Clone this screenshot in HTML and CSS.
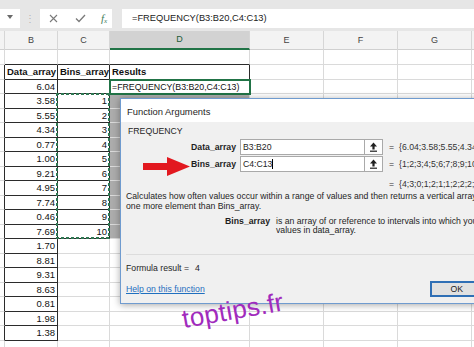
FILE: index.html
```html
<!DOCTYPE html>
<html lang="en">
<head>
  <meta charset="UTF-8">
  <meta name="viewport" content="width=device-width, initial-scale=1.0">
  <title>FREQUENCY - Function Arguments</title>
  <link rel="stylesheet" href="styles.css">
</head>
<body>
<div class="app">
  <!-- formula bar -->
  <div class="formula-bar">
    <div class="name-box">
      <svg width="6" height="4" viewBox="0 0 6 4"><polygon points="0,0 6,0 3,4" fill="#6a6a6a"/></svg>
    </div>
    <div class="grip">⋮</div>
    <div class="fx-buttons">
      <svg class="fx-icon" width="9" height="9" viewBox="0 0 9 9"><path d="M1 1 L8 8 M8 1 L1 8" stroke="#7a7a7a" stroke-width="1.1" fill="none"/></svg>
      <svg class="fx-icon" width="11" height="9" viewBox="0 0 11 9"><path d="M1 4.5 L4 7.5 L10 1" stroke="#7a7a7a" stroke-width="1.3" fill="none"/></svg>
      <span class="fx-icon fx">f<sub>x</sub></span>
    </div>
    <div class="formula-input">=FREQUENCY(B3:B20,C4:C13)</div>
  </div>

  <!-- column letters -->
  <div class="col-headers">
    <div></div>
    <div>B</div>
    <div>C</div>
    <div class="active">D</div>
    <div>E</div>
    <div>F</div>
    <div>G</div>
    <div></div>
  </div>

  <div class="sheet" id="sheet"></div>

  <!-- Function Arguments dialog -->
  <div class="dialog">
    <div class="dlg-title">Function Arguments</div>
    <div class="dlg-body">
      <div class="fn-name">FREQUENCY</div>
      <div class="arg-row">
        <div class="arg-label">Data_array</div>
        <div class="arg-input">B3:B20</div>
        <div class="arg-btn">
          <svg width="9" height="10" viewBox="0 0 9 10"><path d="M4.5 0.5 L8 4.5 L5.6 4.5 L5.6 7.5 L3.4 7.5 L3.4 4.5 L1 4.5 Z" fill="#1f1f1f"/><rect x="1" y="8.6" width="7" height="1.2" fill="#1f1f1f"/></svg>
        </div>
        <div class="arg-eq">=</div>
        <div class="arg-value">{6.04;3.58;5.55;4.34;0.77;1;9.21;4.95;7.74;0.46;7.69;1.7}</div>
      </div>
      <div class="arg-row">
        <div class="arg-label">Bins_array</div>
        <div class="arg-input">C4:C13<span class="caret-line"></span></div>
        <div class="arg-btn">
          <svg width="9" height="10" viewBox="0 0 9 10"><path d="M4.5 0.5 L8 4.5 L5.6 4.5 L5.6 7.5 L3.4 7.5 L3.4 4.5 L1 4.5 Z" fill="#1f1f1f"/><rect x="1" y="8.6" width="7" height="1.2" fill="#1f1f1f"/></svg>
        </div>
        <div class="arg-eq">=</div>
        <div class="arg-value">{1;2;3;4;5;6;7;8;9;10}</div>
      </div>
      <div class="arg-result"><span class="arg-eq">=</span><span class="arg-value">{4;3;0;1;2;1;1;2;2;2;0}</span></div>

      <div class="desc">Calculates how often values occur within a range of values and then returns a vertical array of numbers having<br>one more element than Bins_array.</div>
      <div class="arg-help">
        <div class="help-label">Bins_array</div>
        <div class="help-text">is an array of or reference to intervals into which you want to group the<br>values in data_array.</div>
      </div>

      <div class="dlg-sep"></div>
      <div class="result-line">Formula result =<span class="result-val">4</span></div>
      <div class="dlg-footer">
        <a class="help-link" href="#">Help on this function</a>
        <div class="dlg-btn default">OK</div>
        <div class="dlg-btn">Cancel</div>
      </div>
    </div>
    <!-- red pointer arrow -->
    <svg class="red-arrow" width="48" height="19" viewBox="0 0 48 19"><polygon points="0,6 24,6 24,0 47,9.5 24,19 24,13 0,13" fill="#e2181f"/></svg>
  </div>

  <div class="watermark">toptips.fr</div>
</div>

<script>
  // valeurs de la feuille
  const dataArray = ["6.04","3.58","5.55","4.34","0.77","1.00","9.21","4.95","7.74","0.46","7.69","1.70","8.81","9.31","8.63","0.81","1.98","1.38"];
  const cols = ["a","b","c","d","e","f","g","h"];
  const sheet = document.getElementById("sheet");

  function cellInfo(row, col) {
    const info = { text: "", cls: [] };
    const boxedB = row >= 2 && row <= 20;
    const boxedC = row >= 2 && row <= 13;

    if (col === "a" && boxedB) info.cls.push("edge-r");
    if (row === 1 && (col === "b" || col === "c" || col === "d")) info.cls.push("edge-b");

    if (col === "b" && boxedB) info.cls.push("boxed");
    if (col === "c" && boxedC) info.cls.push("boxed");
    if (col === "d" && row === 2) info.cls.push("boxed");

    if (row === 2) {
      if (col === "b") info.text = "Data_array";
      if (col === "c") info.text = "Bins_array";
      if (col === "d") info.text = "Results";
      if (col !== "a") info.cls.push("head");
    }
    if (col === "b" && row >= 3 && row <= 20) {
      info.text = dataArray[row - 3];
      info.cls.push("num");
    }
    if (col === "c" && row >= 4 && row <= 13) {
      info.text = String(row - 3);
      info.cls.push("num");
    }
    if (col === "d" && row === 3) {
      info.text = "=FREQUENCY(B3:B20,C4:C13)";
      info.cls.push("active");
    }
    if (col === "d" && row >= 4 && row <= 13) info.cls.push("selected");
    return info;
  }

  for (let row = 1; row <= 21; row++) {
    cols.forEach((col) => {
      const info = cellInfo(row, col);
      const cell = document.createElement("div");
      cell.className = ["cell"].concat(info.cls).join(" ");
      cell.textContent = info.text;
      // pointillés de copie autour de C4:C13
      if (col === "c" && row === 4) {
        const marquee = document.createElement("div");
        marquee.className = "marquee";
        cell.appendChild(marquee);
      }
      sheet.appendChild(cell);
    });
  }
</script>
</body>
</html>
```

FILE: styles.css
```css
body {
  margin: 0;
  padding: 0;
  background-color: #fff;
}
.app {
  position: relative;
  width: 474px;
  height: 347px;
  overflow: hidden;
  background-color: #fff;
  font-family: "Liberation Sans", Arial, sans-serif;
  color: #1a1a1a;
}

/* formula bar */
.formula-bar {
  height: 31px;
  box-sizing: border-box;
  padding-top: 9px;
  background-color: #e6e6e6;
  display: flex;
  align-items: flex-start;
}
.name-box {
  width: 20px;
  height: 19px;
  background-color: #fff;
  display: flex;
  align-items: center;
  justify-content: center;
  padding-bottom: 3px;
  box-sizing: border-box;
}
.grip {
  width: 20px;
  height: 19px;
  line-height: 19px;
  text-align: center;
  color: #b5b5b5;
  font-size: 10px;
}
.fx-buttons {
  width: 72px;
  height: 19px;
  background-color: #fff;
  display: flex;
  align-items: center;
}
.fx-buttons .fx-icon:nth-child(1) {
  margin-left: 9px;
}
.fx-buttons .fx-icon:nth-child(2) {
  margin-left: 17px;
}
.fx {
  margin-left: 15px;
  font-family: "Liberation Serif", serif;
  font-style: italic;
  font-size: 11px;
  color: #3f7d5a;
}
.fx sub {
  font-size: 7px;
  vertical-align: -1px;
}
.formula-input {
  flex: 1;
  margin-left: 10px;
  height: 19px;
  line-height: 19px;
  padding-left: 10px;
  background-color: #fff;
  font-size: 9.3px;
  color: #222;
}

/* column headers */
.col-headers {
  display: grid;
  grid-template-columns: 5px 53px 52px 140px 74px 74px 74px 40px;
  height: 19px;
  background-color: #f3f3f3;
  border-bottom: 1px solid #d0d0d0;
  box-sizing: border-box;
}
.col-headers div {
  border-right: 1px solid #d6d6d6;
  text-align: center;
  font-size: 9px;
  line-height: 18px;
  color: #444;
}
.col-headers .active {
  background-color: #d2d2d2;
  border-bottom: 2px solid #217346;
  color: #1d5c38;
  line-height: 17px;
}

/* sheet grid */
.sheet {
  display: grid;
  grid-template-columns: 5px 53px 52px 140px 74px 74px 74px 40px;
  grid-template-rows: 15px;
  grid-auto-rows: 14.5px;
}
.cell {
  position: relative;
  box-sizing: border-box;
  border-right: 1px solid #dadada;
  border-bottom: 1px solid #dadada;
  padding: 0 2px;
  font-size: 9.5px;
  line-height: 14px;
  white-space: nowrap;
  color: #111;
}
.cell.boxed {
  border-right-color: #2b2b2b;
  border-bottom-color: #2b2b2b;
}
.cell.edge-r {
  border-right-color: #2b2b2b;
}
.cell.edge-b {
  border-bottom-color: #2b2b2b;
}
.cell.head {
  font-weight: bold;
}
.cell.num {
  text-align: right;
}
.cell.active {
  outline: 2px solid #217346;
  outline-offset: -1px;
  z-index: 2;
  font-size: 8.8px;
}
.cell.selected {
  background-color: #acacac;
}
.marquee {
  position: absolute;
  left: -2px;
  top: -1px;
  width: 54px;
  height: 146px;
  z-index: 3;
  background:
    repeating-linear-gradient(90deg, #2e7752 0 3px, transparent 3px 5px) top left / 100% 2px no-repeat,
    repeating-linear-gradient(90deg, #2e7752 0 3px, transparent 3px 5px) bottom left / 100% 2px no-repeat,
    repeating-linear-gradient(180deg, #2e7752 0 3px, transparent 3px 5px) top left / 2px 100% no-repeat,
    repeating-linear-gradient(180deg, #2e7752 0 3px, transparent 3px 5px) top right / 2px 100% no-repeat;
}

/* dialog */
.dialog {
  position: absolute;
  left: 120px;
  top: 98px;
  width: 478px;
  height: 206px;
  box-sizing: border-box;
  border: 1px solid #6f9bcf;
  background-color: #f0f0f0;
  box-shadow: 0 1px 7px rgba(0, 0, 0, 0.35);
  z-index: 10;
  font-size: 8.7px;
  color: #1e1e1e;
}
.dlg-title {
  height: 23px;
  line-height: 25px;
  padding-left: 6px;
  background-color: #fff;
  font-size: 9.4px;
}
.dlg-body {
  padding-left: 5px;
}
.fn-name {
  margin-top: 3px;
  margin-bottom: 2px;
  height: 12px;
  line-height: 12px;
  padding-left: 2px;
}
.arg-row {
  display: flex;
  align-items: center;
  height: 16px;
  margin-top: 1px;
}
.arg-row > div {
  flex-shrink: 0;
}
.arg-label {
  width: 110px;
  text-align: right;
  font-weight: bold;
}
.arg-input {
  margin-left: 4px;
  width: 125px;
  height: 16px;
  line-height: 15px;
  box-sizing: border-box;
  padding-left: 2px;
  border: 1px solid #a9a9a9;
  background-color: #fff;
}
.caret-line {
  display: inline-block;
  width: 1px;
  height: 10px;
  background-color: #000;
  vertical-align: -2px;
}
.arg-btn {
  width: 18px;
  height: 16px;
  box-sizing: border-box;
  border: 1px solid #a9a9a9;
  border-left: none;
  background-color: #fdfdfd;
  display: flex;
  align-items: center;
  justify-content: center;
}
.arg-eq {
  margin-left: 6px;
  width: 10px;
  color: #333;
  flex-shrink: 0;
}
.arg-value {
  white-space: nowrap;
  color: #333;
}
.arg-result {
  margin-top: 6px;
  height: 12px;
  line-height: 12px;
  padding-left: 257px;
  display: flex;
}
.desc {
  margin-top: 1px;
  line-height: 10px;
  white-space: nowrap;
}
.arg-help {
  display: flex;
  margin-top: 6px;
  line-height: 9px;
}
.help-label {
  width: 144px;
  flex-shrink: 0;
  text-align: right;
  font-weight: bold;
}
.help-text {
  margin-left: 6px;
  white-space: nowrap;
}
.dlg-sep {
  margin-top: 19px;
  border-top: 1px solid #dcdcdc;
}
.result-line {
  margin-top: 7px;
  height: 12px;
  line-height: 12px;
}
.result-val {
  margin-left: 6px;
}
.dlg-footer {
  margin-top: 7px;
  display: flex;
  align-items: center;
  height: 16px;
}
.help-link {
  flex-shrink: 0;
  color: #1f6fbf;
  text-decoration: underline;
}
.dlg-btn {
  flex-shrink: 0;
  width: 75px;
  height: 16px;
  line-height: 14px;
  box-sizing: border-box;
  text-align: center;
  border: 1px solid #adadad;
  background-color: #e1e1e1;
  margin-left: 6px;
}
.dlg-btn.default {
  width: 54px;
  margin-left: 225px;
  border: 2px solid #2f6fb5;
  line-height: 12px;
}
.red-arrow {
  position: absolute;
  left: 22px;
  top: 58px;
}

/* watermark */
.watermark {
  position: absolute;
  left: 185px;
  top: 304px;
  font-size: 26px;
  color: #a12bbd;
  transform: rotate(-10deg);
  transform-origin: left bottom;
  z-index: 20;
  letter-spacing: 0.3px;
}
```
